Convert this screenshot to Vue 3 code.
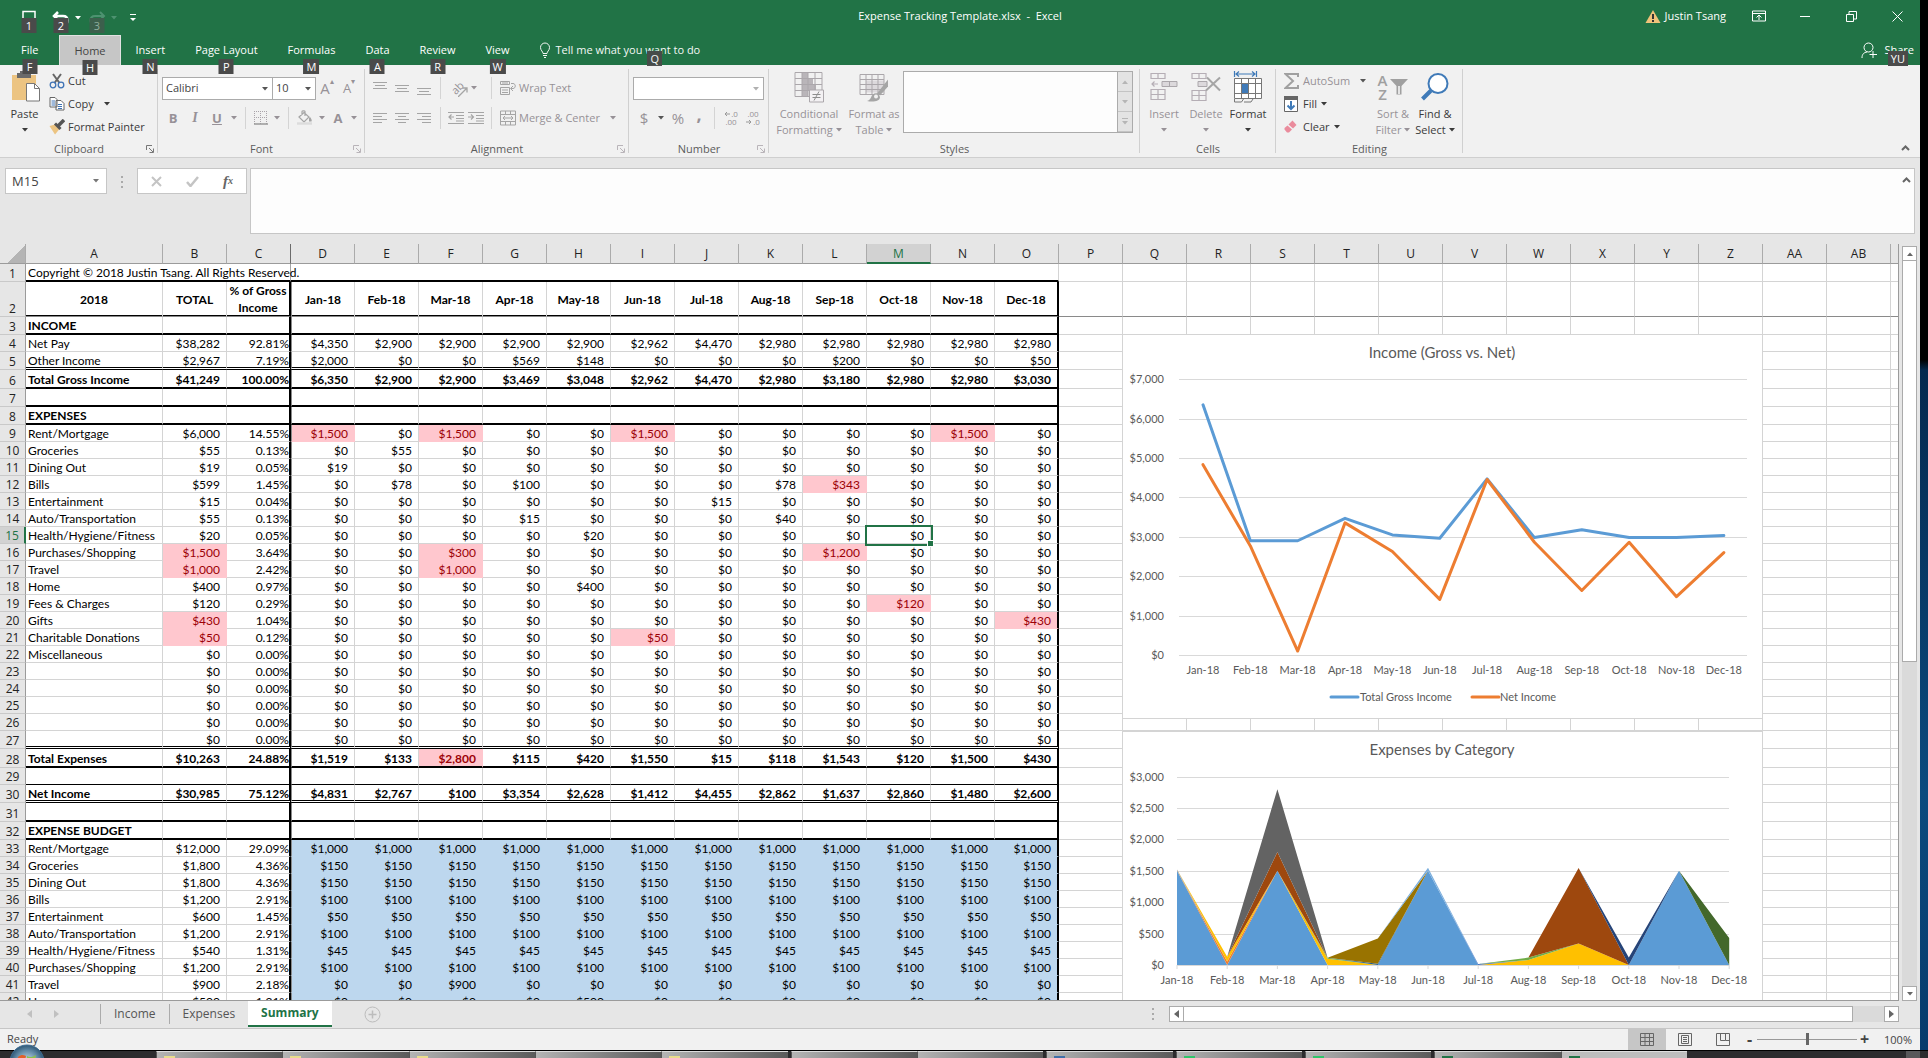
<script setup>
import { h } from 'vue'

const icons = {
  save: [16, 16, '<path d="M2 1.500h12v12H2zM4.500 13v-4h7v4" stroke="#fff" stroke-width="1.500"/>'],
  undo: [18, 16, '<path d="M6 2 2 6l4 4M2.500 6H11c3 0 4.500 2 4.500 4.500S14 14 12 14" stroke="#fff" stroke-width="2.500"/>'],
  redo: [18, 16, '<path d="M12 2l4 4-4 4M15.500 6H7c-3 0-4.500 2-4.500 4.500S4 14 6 14" stroke="#4d9270" stroke-width="2"/>'],
  custom: [8, 10, '<path d="M1 1.500h6" stroke="#fff"/><path d="M1 5h6L4 8z" fill="#fff"/>'],
  bulb: [12, 16, '<path d="M4 11.500c0-2-2.500-3-2.500-6a4.500 4.500 0 0 1 9 0c0 3-2.500 4-2.500 6zM4 13.500h4M5 15.500h2" stroke="#fff"/>'],
  warn: [16, 15, '<path d="M8 1 15.500 14H.5z" fill="#f0c27a"/><path d="M8 5v5" stroke="#333" stroke-width="2"/><path d="M8 11v2" stroke="#333" stroke-width="2"/>'],
  display: [14, 12, '<path d="M.5 1h13v10H.5zM.5 3.500h13M7 10V5M4.500 7.500 7 5l2.500 2.500" stroke="#fff"/>'],
  min: [10, 10, '<path d="M0 5.500h10" stroke="#fff"/>'],
  restore: [11, 11, '<path d="M.5 3.500h7v7h-7zM3 3V.5h7.500V8H8" stroke="#fff"/>'],
  close: [11, 11, '<path d="M.5.500l10 10M10.500.500l-10 10" stroke="#fff"/>'],
  share: [16, 17, '<circle cx="7.500" cy="5.500" r="4.500" stroke="#fff"/><path d="M1 16c0-4 2-5.500 5-6M12 9v7M8.500 12.500H16" stroke="#fff"/>'],
  paste: [30, 32, '<path d="M1 4h24v25H1z" fill="#ecc482"/><path d="M6 7V2h3V0h8v2h3v5z" fill="#6a6a6a"/><path d="M15.500 12.500h8l5 5V30h-13z" fill="#fff" stroke="#777"/><path d="M23.500 12.500v5h5" stroke="#777"/>'],
  cut: [16, 16, '<path d="M4 1l6.500 9M12 1 5.500 10" stroke="#666" stroke-width="2"/><circle cx="4" cy="12" r="2.800" stroke="#3f73b5" stroke-width="1.300"/><circle cx="12" cy="12" r="2.800" stroke="#3f73b5" stroke-width="1.300"/>'],
  copy: [16, 16, '<path d="M1 1.500h5l2 2V11H1zM7 4.500h5l3 3V14H7z" fill="#fff" stroke="#666"/><path d="M2.500 5H6M2.500 7H6M2.500 9H6M9 8.500h4M9 10.500h4M9 12.500h4" stroke="#3f73b5"/>'],
  brush: [16, 16, '<path d="M.5 7 6 5.500 10.500 10 6 15.500z" fill="#ecc482"/><path d="M6 4.500 11.500 10" stroke="#555" stroke-width="3"/><path d="M9 7l4-4 2-2" stroke="#555" stroke-width="3.500"/>'],
  launch: [8, 8, '<path d="M.5 5V.5H6M3 3l4 4M7.500 3.500v4h-4" stroke="currentColor"/>'],
  caret: [6, 4, '<path d="M0 0h6L3 3.500z" fill="currentColor"/>'],
  upcaret: [6, 4, '<path d="M0 4h6L3 .5z" fill="currentColor"/>'],
  more: [8, 7, '<path d="M1 .5h6" stroke="currentColor"/><path d="M1 3h6L4 6.500z" fill="currentColor"/>'],
  chev: [9, 6, '<path d="M1 5l3.500-3.500L8 5" stroke="#666" stroke-width="2"/>'],
  border: [14, 14, '<path d="M.5 0v13M6.500 0v13M12.500 0v13M0 .5h13M0 6.500h13" stroke="#a9a3a9" stroke-dasharray="1 1"/><path d="M0 13h14" stroke="#999" stroke-width="1.500"/>'],
  bucket: [16, 16, '<path d="M2 7l5-4.500L12 7l-5 5zM5 5V1.500c0-1 3-1 3 0V6" stroke="#a5a5a5" stroke-width="1.200"/><path d="M13 7c1.500 2 2 3 1.500 4.500H12V8z" fill="#a5a5a5"/><path d="M0 13.500h15" stroke="#dcdcdc" stroke-width="2.500"/>'],
  top: [14, 14, '<path d="M0 1.500h14M2 4.500h10M0 7.500h14" stroke="#a5a5a5"/>'],
  mid: [14, 14, '<path d="M0 4.500h14M2 7.500h10M0 10.500h14" stroke="#a5a5a5"/>'],
  bot: [14, 14, '<path d="M0 7.500h14M2 10.500h10M0 13.500h14" stroke="#a5a5a5"/>'],
  left: [14, 14, '<path d="M0 2.500h14M0 5.500h9M0 8.500h14M0 11.500h9" stroke="#a5a5a5"/>'],
  center: [14, 14, '<path d="M0 2.500h14M3 5.500h8M0 8.500h14M3 11.500h8" stroke="#a5a5a5"/>'],
  right: [14, 14, '<path d="M0 2.500h14M5 5.500h9M0 8.500h14M5 11.500h9" stroke="#a5a5a5"/>'],
  arrowNE: [10, 10, '<path d="M0 10 9 1M4.500 1H9v4.500" stroke="#a5a5a5" stroke-width="1.300"/>'],
  outdent: [16, 14, '<path d="M0 1.500h16M8 4.500h8M8 7.500h8M0 12.500h16M8 10h8M6 6H1M3.500 3.500 1 6l2.500 2.500" stroke="#a5a5a5" stroke-width="1.200"/>'],
  indent: [16, 14, '<path d="M0 1.500h16M8 4.500h8M8 7.500h8M0 12.500h16M8 10h8M0 6h5M3 3.500 5.500 6 3 8.500" stroke="#a5a5a5" stroke-width="1.200"/>'],
  wrap: [16, 16, '<path d="M.5 1.500h9v3h-9zM.5 7.500h9v7h-9zM2 3h6M2 10h6M2 12.500h6M11 3.500h2c3 0 3 5 0 5h-2M13 6l-2.500 2.500L13 11" stroke="#a5a5a5"/>'],
  merge: [16, 16, '<path d="M.5 1h15v14H.5zM.5 4.500h15M.5 11.500h15M5.500 1v3.500M10.500 1v3.500M5.500 11.500V15M10.500 11.500V15M3 8h10M5 6 3 8l2 2M11 6l2 2-2 2" stroke="#a5a5a5"/>'],
  arrL: [6, 6, '<path d="M6 3H1M3 1 1 3l2 2" stroke="#999"/>'],
  arrR: [6, 6, '<path d="M0 3h5M3 1l2 2-2 2" stroke="#999"/>'],
  cond: [30, 31, '<path d="M8 1h6v24H8z" fill="#b9b5b9"/><path d="M14 7h5v6h-5zM14 13h8v6h-8z" fill="#b9b5b9"/><path d="M1 1h27v24H1zM1 7h27M1 13h27M1 19h27M8 1v24M14 1v24M21 1v24" stroke="#aba7ab"/><path d="M15.500 18.500h14v12h-14z" fill="#f3f1f3" stroke="#aba7ab"/><path d="M18.500 23h8M18.500 26h8M25 20l-5 9" stroke="#8d8d8d"/>'],
  fmtTable: [30, 31, '<path d="M7 9h18v12H7z" fill="#dcd9dc"/><path d="M1 3h24v20H1zM1 8h24M1 13h24M1 18h24M7 3v20M13 3v20M19 3v20" stroke="#aba7ab"/><path d="M18 22 29 8v7l-8 9z" fill="#a5a5a5"/><path d="M19 22c-4-1-6 1-7 4-1 2-2 3-4 3.500 5 1 13 1 13-4z" fill="#a5a5a5"/><circle cx="17" cy="25" r="2" fill="#f1f1f1"/>'],
  insert: [28, 31, '<path d="M1 2h14v5H1zM8 2v5M1 18h14v10H1zM8 18v10M1 23h14M8 12.500H2M4.500 10 2 12.500 4.500 15" stroke="#b5aeb5" stroke-width="1.200"/><path d="M12 10h15v5H12z" fill="#dcd9dc" stroke="#aba7ab"/><path d="M19.500 10v5" stroke="#aba7ab"/>'],
  del: [30, 31, '<path d="M1 2h14v5H1zM8 2v5M1 19h14v10H1zM8 19v10M1 24h14" stroke="#b5aeb5" stroke-width="1.200"/><path d="M7 10h9v5H7z" fill="#dcd9dc" stroke="#aba7ab"/><path d="M16 6l13 13M29 6 15 19" stroke="#a5a5a5" stroke-width="2"/>'],
  format: [30, 32, '<path d="M1.500 0v6M23.500 0v6M3 3h19M6 .5 3 3l3 2.500M19 .5 22 3l-3 2.500" stroke="#3f7ab8" stroke-width="1.200"/><path d="M1.500 7.500h27v20h-27z" fill="#fff"/><path d="M8 13h8v9H8z" fill="#3f7ab8"/><path d="M1.500 7.500h27v20h-27zM1.500 12.500h27M1.500 22.500h27M8.500 7.500v20M15.500 7.500v20M22.500 7.500v20M1.500 28v3h7l2-3M11 31h7l2-3" stroke="#777"/>'],
  sigma: [16, 16, '<path d="M14 4V1H1.500L9 8l-7.500 7H14v-3" stroke="#a0a0a0" stroke-width="2"/>'],
  fill: [14, 16, '<path d="M.5 3h13v12.500H.5z" fill="#fff" stroke="#666"/><path d="M0 0h14v4H0z" fill="#666"/><path d="M7 5v8M3.500 9.500 7 13l3.500-3.500" stroke="#3f7ab8" stroke-width="2"/>'],
  eraser: [14, 14, '<path d="M8.500.5 12.500 5 9 8.500 4.500 4.500z" fill="#ea8b9c"/><path d="M3.500 5.500 8 9.500 5 12.500H3L.5 9.500V8z" fill="#ea8b9c"/>'],
  funnel: [18, 16, '<path d="M0 0h18l-6.500 7v8.500h-5V7z" fill="#a0a0a0"/><path d="M9 7v8" stroke="#e5e5e5" stroke-width="2"/>'],
  find: [28, 28, '<circle cx="17" cy="10.500" r="9.500" fill="#fff" stroke="#3f7ab8" stroke-width="2"/><path d="M10 17.500 1.500 26" stroke="#3f7ab8" stroke-width="4"/>'],
  x: [11, 11, '<path d="M1 1l9 9M10 1 1 10" stroke="#c4c4c4" stroke-width="2"/>'],
  check: [13, 11, '<path d="M1 6l3.500 4L12 1" stroke="#c4c4c4" stroke-width="2.500"/>'],
  triL: [5, 8, '<path d="M5 0v8L0 4z" fill="currentColor"/>'],
  triR: [5, 8, '<path d="M0 0v8l5-4z" fill="currentColor"/>'],
  plus: [17, 17, '<circle cx="8.500" cy="8.500" r="7.500" stroke="#bcbcbc"/><path d="M8.500 4.500v8M4.500 8.500h8" stroke="#bcbcbc" stroke-width="1.500"/>'],
  normal: [14, 13, '<path d="M.5.5h13v12H.5zM.5 4.500h13M.5 8.500h13M5 .5v12M9.500.5v12" stroke="#666"/>'],
  pageL: [14, 13, '<path d="M.5.5h13v12H.5zM3.500 2.500h7v8h-7zM5 4.500h4M5 6.500h4M5 8.500h4" stroke="#666"/>'],
  pageB: [14, 13, '<path d="M.5.5h13v12H.5zM4.500.5v7h5v-7M9.500 7.500h4" stroke="#666"/>'],
  orb: [36, 14, '<defs><radialGradient id="g"><stop offset="0" stop-color="#cfe6f2"/><stop offset=".7" stop-color="#5d86a3"/><stop offset="1" stop-color="#2f5876"/></radialGradient></defs><circle cx="18" cy="18" r="17" fill="url(#g)" stroke="#3d6c94"/><path d="M9 13c3-2.500 5-2.500 8-1l-1 4H8z" fill="#e2602a"/><path d="M18 12c3 2 6 1 9-1l-1 5h-8z" fill="#8cc04b"/>'],
}
const Ico = (p) => {
  const [w, ht, body] = icons[p.n]
  return h('svg', { width: w, height: ht, viewBox: `0 0 ${w} ${ht}`, fill: 'none', 'aria-hidden': 'true', innerHTML: body })
}
Ico.props = ['n']

const tabs = [['File', 'F'], ['Home', 'H'], ['Insert', 'N'], ['Page Layout', 'P'], ['Formulas', 'M'], ['Data', 'A'], ['Review', 'R'], ['View', 'W']]

const cols = ['A', 'B', 'C', 'D', 'E', 'F', 'G', 'H', 'I', 'J', 'K', 'L', 'M', 'N', 'O', 'P', 'Q', 'R', 'S', 'T', 'U', 'V', 'W', 'X', 'Y', 'Z', 'AA', 'AB', '']
const months = ['Jan-18', 'Feb-18', 'Mar-18', 'Apr-18', 'May-18', 'Jun-18', 'Jul-18', 'Aug-18', 'Sep-18', 'Oct-18', 'Nov-18', 'Dec-18']

const usd = (n) => '$' + n.toLocaleString('en-US')
const at = (o) => months.map((_, i) => o[i] || 0)
const all = (n) => Array(12).fill(n)
const row = (n, kind, label, total, pct, vals, hot = []) => ({ n, kind, hot, cells: [label, total === '' ? '' : usd(total), pct, ...(vals ? vals.map(usd) : all(''))] })

const gross = [6350, 2900, 2900, 3469, 3048, 2962, 4470, 2980, 3180, 2980, 2980, 3030]
const net = [4831, 2767, 100, 3354, 2628, 1412, 4455, 2862, 1637, 2860, 1480, 2600]
const expenses = [
  ['Rent/Mortgage', 6000, '14.55%', at({ 0: 1500, 2: 1500, 5: 1500, 10: 1500 }), [3, 5, 8, 13], '#5b9bd5'],
  ['Groceries', 55, '0.13%', at({ 1: 55 }), [], '#ed7d31'],
  ['Dining Out', 19, '0.05%', at({ 0: 19 }), [], '#a5a5a5'],
  ['Bills', 599, '1.45%', at({ 1: 78, 3: 100, 7: 78, 8: 343 }), [11], '#ffc000'],
  ['Entertainment', 15, '0.04%', at({ 6: 15 }), [], '#4472c4'],
  ['Auto/Transportation', 55, '0.13%', at({ 3: 15, 7: 40 }), [], '#70ad47'],
  ['Health/Hygiene/Fitness', 20, '0.05%', at({ 4: 20 }), [], '#255e91'],
  ['Purchases/Shopping', 1500, '3.64%', at({ 2: 300, 8: 1200 }), [1, 5, 11], '#9e480e'],
  ['Travel', 1000, '2.42%', at({ 2: 1000 }), [1, 5], '#636363'],
  ['Home', 400, '0.97%', at({ 4: 400 }), [], '#997300'],
  ['Fees & Charges', 120, '0.29%', at({ 9: 120 }), [12], '#264478'],
  ['Gifts', 430, '1.04%', at({ 11: 430 }), [1, 14], '#43682b'],
  ['Charitable Donations', 50, '0.12%', at({ 5: 50 }), [1, 8], '#7cafdd'],
  ['Miscellaneous', 0, '0.00%', all(0), []],
]
const budget = [
  ['Rent/Mortgage', 12000, '29.09%', all(1000)],
  ['Groceries', 1800, '4.36%', all(150)],
  ['Dining Out', 1800, '4.36%', all(150)],
  ['Bills', 1200, '2.91%', all(100)],
  ['Entertainment', 600, '1.45%', all(50)],
  ['Auto/Transportation', 1200, '2.91%', all(100)],
  ['Health/Hygiene/Fitness', 540, '1.31%', all(45)],
  ['Purchases/Shopping', 1200, '2.91%', all(100)],
  ['Travel', 900, '2.18%', at({ 2: 900 })],
  ['Home', 500, '1.21%', at({ 4: 500 })],
]
const rows = [
  { n: 2, kind: 'head', hot: [], cells: ['2018', 'TOTAL', '% of Gross Income', ...months] },
  row(3, 'bold thick', 'INCOME', '', ''),
  row(4, '', 'Net Pay', 38282, '92.81%', [4350, 2900, 2900, 2900, 2900, 2962, 4470, 2980, 2980, 2980, 2980, 2980]),
  row(5, 'dbl', 'Other Income', 2967, '7.19%', [2000, 0, 0, 569, 148, 0, 0, 0, 200, 0, 0, 50]),
  row(6, 'bold thick tall', 'Total Gross Income', 41249, '100.00%', gross),
  row(7, 'thick', '', '', ''),
  row(8, 'bold thick', 'EXPENSES', '', ''),
  ...expenses.map((e, i) => row(9 + i, '', e[0], e[1], e[2], e[3], e[4])),
  ...[23, 24, 25, 26].map((n) => row(n, '', '', 0, '0.00%', all(0))),
  row(27, 'dbl', '', 0, '0.00%', all(0)),
  row(28, 'bold thick tall', 'Total Expenses', 10263, '24.88%', [1519, 133, 2800, 115, 420, 1550, 15, 118, 1543, 120, 1500, 430], [5]),
  row(29, 'thin', '', '', ''),
  row(30, 'bold dbl', 'Net Income', 30985, '75.12%', net),
  row(31, 'thick tall', '', '', ''),
  row(32, 'bold thick', 'EXPENSE BUDGET', '', ''),
  ...budget.map((b, i) => row(33 + i, 'plan', b[0], b[1], b[2], b[3])),
]

const lx = (i) => 81 + i * 47.35
const ly = (v) => 321 - v * 0.0394
const line = (d) => d.map((v, i) => `${lx(i)},${ly(v)}`).join(' ')
const ax = (i) => 55 + i * 50.2
const ay = (v) => 234 - v * 0.0628
let base = all(0)
const areas = expenses.slice(0, 13).map((e) => {
  const next = base.map((b, i) => b + e[3][i])
  const pts = [...next.map((v, i) => `${ax(i)},${ay(v)}`), ...base.map((v, i) => `${ax(i)},${ay(v)}`).reverse()].join(' ')
  base = next
  return { color: e[5], pts }
})
const tasks = ['f', 'f', 'f', '', 'f end', '', 'end', 'b end', 'g end', 'g end', 'x', 'x lit']
</script>

<template>
  <div class="desktop">
    <div class="window">
      <header class="titlebar">
        <div class="quick">
          <button class="q" aria-label="Save"><Ico n="save" /><kbd class="tip">1</kbd></button>
          <button class="q" aria-label="Undo"><Ico n="undo" /><kbd class="tip">2</kbd></button>
          <button class="q caret-w" aria-label="Undo list"><Ico n="caret" /></button>
          <button class="q" aria-label="Redo"><Ico n="redo" /><kbd class="tip faint">3</kbd></button>
          <button class="q caret-w dimg" aria-label="Redo list"><Ico n="caret" /></button>
          <button class="q" aria-label="Customize"><Ico n="custom" /></button>
        </div>
        <div class="title">Expense Tracking Template.xlsx&nbsp; -&nbsp; Excel</div>
        <div class="wincontrols">
          <span class="user"><Ico n="warn" />Justin Tsang</span>
          <button aria-label="Ribbon display"><Ico n="display" /></button>
          <button aria-label="Minimize"><Ico n="min" /></button>
          <button aria-label="Restore"><Ico n="restore" /></button>
          <button aria-label="Close"><Ico n="close" /></button>
        </div>
      </header>
      <nav class="tabs">
        <button v-for="t in tabs" :key="t[0]" class="tab" :class="{ on: t[0] === 'Home', file: t[0] === 'File' }">{{ t[0] }}<kbd class="tip">{{ t[1] }}</kbd></button>
        <button class="tell"><Ico n="bulb" />Tell me what you want to do<kbd class="tip up">Q</kbd></button>
        <button class="share"><Ico n="share" />Share<kbd class="tip up">YU</kbd></button>
      </nav>

      <div class="ribbon">
        <section class="group clip">
          <div class="body">
            <button class="big paste"><Ico n="paste" /><span>Paste</span><Ico n="caret" /></button>
            <div class="stack">
              <button><i><Ico n="cut" /></i>Cut</button>
              <button><i><Ico n="copy" /></i>Copy<Ico n="caret" class="far" /></button>
              <button><i><Ico n="brush" /></i>Format Painter</button>
            </div>
          </div>
          <footer>Clipboard<Ico n="launch" class="launch" /></footer>
        </section>
        <section class="group font off">
          <div class="lines">
            <div class="ln">
              <label class="combo fname"><select aria-label="Font"><option>Calibri</option></select><Ico n="caret" /></label>
              <label class="combo fsize"><select aria-label="Font size"><option>10</option></select><Ico n="caret" /></label>
              <button class="s22 serif">A<sup>▴</sup></button><button class="s22 serif sm">A<sup>▾</sup></button>
            </div>
            <div class="ln">
              <button class="s22 b">B</button><button class="s22 it">I</button><button class="s22 u">U</button><span class="s12"><Ico n="caret" /></span><span class="sep"></span>
              <button class="s20" aria-label="Borders"><Ico n="border" /></button><span class="s12"><Ico n="caret" /></span><span class="sep"></span>
              <button class="s22" aria-label="Fill colour"><Ico n="bucket" /></button><span class="s12"><Ico n="caret" /></span><button class="s20 b">A</button><span class="s12"><Ico n="caret" /></span>
            </div>
          </div>
          <footer>Font<Ico n="launch" class="launch" /></footer>
        </section>
        <section class="group align off">
          <div class="lines">
            <div class="ln">
              <button v-for="k in ['top', 'mid', 'bot']" :key="k" class="s22" :aria-label="k"><Ico :n="k" /></button><span class="sep"></span>
              <div class="pair"><button class="s22 rot" aria-label="Orientation"><em>ab</em><Ico n="arrowNE" /></button><span class="s12"><Ico n="caret" /></span></div><span class="sep"></span>
              <button class="txt"><i><Ico n="wrap" /></i>Wrap Text</button>
            </div>
            <div class="ln">
              <button v-for="k in ['left', 'center', 'right']" :key="k" class="s22" :aria-label="k"><Ico :n="k" /></button><span class="sep"></span>
              <div class="pair"><button class="s20" aria-label="Decrease indent"><Ico n="outdent" /></button><button class="s20" aria-label="Increase indent"><Ico n="indent" /></button></div><span class="sep"></span>
              <button class="txt"><i><Ico n="merge" /></i>Merge &amp; Center<Ico n="caret" class="far" /></button>
            </div>
          </div>
          <footer>Alignment<Ico n="launch" class="launch" /></footer>
        </section>
        <section class="group number off">
          <div class="lines">
            <div class="ln"><label class="combo fnum"><select aria-label="Number format"><option></option></select><Ico n="caret" /></label></div>
            <div class="ln">
              <button class="s22 lg">$</button><span class="s12 dark"><Ico n="caret" /></span><button class="s22 lg">%</button><button class="s20 comma">,</button><span class="sep"></span>
              <button class="s22 dec"><span><Ico n="arrL" />.0</span><span>.00</span></button><button class="s22 dec"><span>.00</span><span><Ico n="arrR" />.0</span></button>
            </div>
          </div>
          <footer>Number<Ico n="launch" class="launch" /></footer>
        </section>
        <section class="group styles off">
          <div class="body">
            <button class="big cf"><Ico n="cond" /><span>Conditional</span><span>Formatting <Ico n="caret" /></span></button>
            <button class="big ft"><Ico n="fmtTable" /><span>Format as</span><span>Table <Ico n="caret" /></span></button>
            <div class="gallery"><div class="swatches"></div><div class="spin"><span><Ico n="upcaret" /></span><span><Ico n="caret" /></span><span><Ico n="more" /></span></div></div>
          </div>
          <footer>Styles</footer>
        </section>
        <section class="group cells">
          <div class="body">
            <button class="big off"><Ico n="insert" /><span>Insert</span><Ico n="caret" /></button>
            <button class="big off"><Ico n="del" /><span>Delete</span><Ico n="caret" /></button>
            <button class="big"><Ico n="format" /><span>Format</span><Ico n="caret" /></button>
          </div>
          <footer>Cells</footer>
        </section>
        <section class="group editing">
          <div class="body">
            <div class="stack">
              <button class="grey"><i><Ico n="sigma" /></i>AutoSum<Ico n="caret" class="far dark" /></button>
              <button><i><Ico n="fill" /></i>Fill<Ico n="caret" class="near" /></button>
              <button><i><Ico n="eraser" /></i>Clear<Ico n="caret" class="near" /></button>
            </div>
            <button class="big off sort"><span class="az"><b>A<br>Z</b><Ico n="funnel" /></span><span>Sort &amp;</span><span>Filter <Ico n="caret" /></span></button>
            <button class="big findb"><Ico n="find" /><span>Find &amp;</span><span>Select <Ico n="caret" /></span></button>
          </div>
          <footer>Editing</footer>
        </section>
        <button class="collapse" aria-label="Collapse ribbon"><Ico n="chev" /></button>
      </div>

      <div class="formula">
        <label class="namebox"><input aria-label="Name box" value="M15"><Ico n="caret" /></label>
        <span class="dots"></span>
        <div class="fx"><button aria-label="Cancel"><Ico n="x" /></button><button aria-label="Enter"><Ico n="check" /></button><button class="fxi">f<sub>x</sub></button></div>
        <label class="fbar"><textarea aria-label="Formula bar"></textarea><Ico n="chev" /></label>
      </div>

      <main class="work">
        <div class="sheet">
          <table>
            <colgroup><col class="c-h"><col class="c-a"><col v-for="c in cols.slice(1)" :key="c" class="c-n"></colgroup>
            <thead>
              <tr><th class="corner"></th><th v-for="c in cols" :key="c" :class="{ sel: c === 'M', frz: c === 'C' }">{{ c }}</th></tr>
            </thead>
            <tbody>
              <tr class="r-first">
                <th>1</th><td colspan="3" class="copy">Copyright © 2018 Justin Tsang. All Rights Reserved.</td><td colspan="12" class="cover"></td><td v-for="c in 14" :key="c"></td>
              </tr>
              <tr v-for="r in rows" :key="r.n" :class="r.kind">
                <th :class="{ sel: r.n === 15 }">{{ r.n }}</th>
                <td v-for="(v, i) in r.cells" :key="i" :class="['d', 'k' + (i < 3 ? i : i === 14 ? 14 : i === 3 ? 3 : 'n'), { hot: r.hot.includes(i), cur: r.n === 15 && i === 12 }]">{{ v }}</td>
                <td v-for="c in 14" :key="'e' + c"></td>
              </tr>
            </tbody>
          </table>

          <svg class="chart one" width="641" height="385" viewBox="0 0 641 385">
            <text x="320" y="24" class="ct">Income (Gross vs. Net)</text>
            <g v-for="k in 8" :key="k">
              <line x1="57" x2="625" :y1="Math.round(ly((k - 1) * 1000)) + 0.5" :y2="Math.round(ly((k - 1) * 1000)) + 0.5" class="gl" />
              <text x="42" :y="Math.round(ly((k - 1) * 1000)) + 4" class="yl">{{ usd((k - 1) * 1000) }}</text>
            </g>
            <text v-for="(m, i) in months" :key="m" :x="lx(i)" y="340" class="xl">{{ m }}</text>
            <polyline :points="line(gross)" stroke="#5b9bd5" class="pl" />
            <polyline :points="line(net)" stroke="#ed7d31" class="pl" />
            <line x1="209" x2="236" y1="363" y2="363" stroke="#5b9bd5" class="pl" />
            <text x="238" y="367" class="lg">Total Gross Income</text>
            <line x1="350" x2="377" y1="363" y2="363" stroke="#ed7d31" class="pl" />
            <text x="378" y="367" class="lg">Net Income</text>
          </svg>
          <svg class="chart two" width="641" height="385" viewBox="0 0 641 385">
            <text x="320" y="24" class="ct">Expenses by Category</text>
            <g v-for="k in 7" :key="k">
              <line x1="55" x2="607" :y1="Math.round(ay((k - 1) * 500)) + 0.5" :y2="Math.round(ay((k - 1) * 500)) + 0.5" class="gl" />
              <text x="42" :y="Math.round(ay((k - 1) * 500)) + 4" class="yl">{{ usd((k - 1) * 500) }}</text>
            </g>
            <polygon v-for="a in areas" :key="a.color" :points="a.pts" :fill="a.color" />
            <g v-for="(m, i) in months" :key="m">
              <line :x1="ax(i)" :x2="ax(i)" y1="234" y2="238" class="gl" />
              <text :x="ax(i)" y="253" class="xl">{{ m }}</text>
            </g>
          </svg>
        </div>
        <div class="vscroll">
          <button aria-label="Scroll up"><Ico n="upcaret" /></button><div class="vthumb"></div><div class="vtrack"></div><button aria-label="Scroll down"><Ico n="caret" /></button>
        </div>
      </main>

      <div class="sheettabs">
        <div class="navs"><button aria-label="Previous sheet"><Ico n="triL" /></button><button aria-label="Next sheet"><Ico n="triR" /></button></div>
        <button class="st">Income</button><button class="st">Expenses</button><button class="st on">Summary</button>
        <button class="add" aria-label="New sheet"><Ico n="plus" /></button>
        <span class="dots"></span>
        <div class="hscroll"><button aria-label="Scroll left"><Ico n="triL" /></button><div class="hthumb"></div><div class="htrack"></div><button aria-label="Scroll right"><Ico n="triR" /></button></div>
      </div>
      <div class="status">
        <span>Ready</span>
        <div class="views">
          <button class="on" aria-label="Normal"><Ico n="normal" /></button><button aria-label="Page layout"><Ico n="pageL" /></button><button aria-label="Page break"><Ico n="pageB" /></button>
          <button class="zb">-</button><input type="range" min="0" max="100" value="50" aria-label="Zoom"><button class="zb">+</button><span class="pc">100%</span>
        </div>
      </div>
    </div>
    <div class="taskbar">
      <Ico n="orb" class="orb" />
      <div class="pad"></div>
      <div v-for="(t, i) in tasks" :key="i" class="task" :class="t"></div>
      <div class="peek"></div>
    </div>
  </div>
</template>

<style>
body { margin: 0; }
</style>
<style scoped>
* { box-sizing: border-box; }
.desktop { height: 100vh; overflow: hidden; display: flex; flex-direction: column; font: 11px/16px "Open Sans", "Noto Sans", sans-serif; color: #444; background: linear-gradient(#000 0, #000 34%, #04294f 35%, #0b4a7e 75%, #063a6b 100%); }
button { font: inherit; color: inherit; background: none; border: 0; padding: 0; margin: 0; display: flex; align-items: center; justify-content: center; white-space: nowrap; }
svg { display: block; flex: none; }
.window { flex: 1; min-height: 0; margin-right: 8px; display: flex; flex-direction: column; background: #e6e6e6; }

.titlebar { height: 35px; background: #217346; color: #fff; display: grid; grid-template-columns: 1fr auto 1fr; align-items: center; flex: none; }
.title { padding-bottom: 3px; }
.quick { display: flex; align-items: center; padding-left: 18px; }
.q { position: relative; width: 22px; height: 35px; }
.q:nth-child(2) { margin-left: 12px; width: 18px; }
.q:nth-child(4) { margin-left: 0; }
.caret-w { width: 16px; }
.dimg { color: #4d9270; width: 12px; }
.quick .q:last-child { margin-left: 5px; width: 16px; }
.wincontrols { display: flex; justify-content: flex-end; align-items: center; padding-bottom: 3px; }
.wincontrols button { width: 46px; height: 30px; flex: none; }
.user { display: flex; align-items: center; gap: 4px; margin-right: 10px; }
.tip { position: absolute; z-index: 3; left: 50%; top: 24px; transform: translateX(-50%); min-width: 15px; height: 15px; padding: 0 3px; background: #4a4a4a; color: #fff; font: 11px/15px "Open Sans", sans-serif; text-align: center; }
.titlebar .tip { top: 18px; }
.tip.up { top: 16px; left: auto; right: 46px; transform: none; }
.tip.faint { background: #3c5f4c; color: #8fae9d; }

.tabs { height: 30px; flex: none; background: #217346; color: #fff; display: flex; }
.tab { position: relative; padding: 0 15px; }
.tab.file { padding: 0 21px; }
.tab.on { background: #c6c6c6; color: #444; border: 1px solid #e2e2e2; border-bottom: 0; padding: 0 14px; }
.tell { position: relative; margin-left: 6px; padding: 0 8px; gap: 5px; opacity: .95; }
.share { position: relative; margin-left: auto; padding-right: 6px; gap: 7px; }
.share .tip.up { right: 12px; }

.ribbon { height: 93px; flex: none; display: flex; background: #f1f1f1; border-bottom: 1px solid #cfcfcf; }
.group { flex: none; position: relative; margin-top: 4px; height: 88px; display: flex; flex-direction: column; }
.group::after { content: ""; position: absolute; right: 0; top: 0; bottom: 4px; width: 1px; background: #d0d0d0; }
.group footer { height: 16px; margin-top: auto; text-align: center; color: #5c5c5c; line-height: 16px; }
.launch { position: absolute; right: 4px; bottom: 4px; color: #777; }
.off .launch { color: #b9b4b9; }
.clip { width: 158px; } .font { width: 207px; } .align { width: 264px; } .number { width: 140px; } .styles { width: 371px; } .cells { width: 136px; } .editing { width: 187px; }
.body { display: flex; height: 70px; }
.big { flex-direction: column; justify-content: flex-start; line-height: 16px; padding-top: 2px; width: 42px; color: #3a3a3a; }
.big > svg:first-child { height: 32px; margin-bottom: 3px; }
.big > svg:last-child { margin-top: 6px; }
.big span { display: flex; align-items: center; gap: 3px; }
.paste { width: 49px; }
.paste > svg:first-child { margin-left: 3px; }
.off, .off .big, .big.off { color: #979197; }
.stack { display: flex; flex-direction: column; color: #3a3a3a; }
.stack button { height: 23px; justify-content: flex-start; }
.stack i, .txt i { width: 19px; display: flex; flex: none; justify-content: flex-start; }
.stack .grey { color: #979197; }
.far { margin-left: 10px; } .near { margin-left: 4px; } .dark { color: #555; }
.lines { padding-top: 4px; }
.ln { display: flex; height: 30px; align-items: center; padding-left: 4px; }
.combo { position: relative; height: 23px; border: 1px solid #ababab; background: #fff; color: #444; }
.combo select { appearance: none; border: 0; background: none; width: 100%; height: 21px; padding: 0 3px; font: inherit; color: #444; }
.combo svg { position: absolute; right: 4px; top: 9px; color: #555; pointer-events: none; }
.fname { width: 111px; } .fsize { width: 44px; margin-left: -1px; } .fnum { width: 131px; }
.fnum svg { color: #b0b0b0; }
.s22 { width: 22px; height: 24px; display: flex; align-items: center; justify-content: center; }
.s20 { width: 20px; height: 24px; display: flex; align-items: center; justify-content: center; }
.s12 { width: 12px; display: flex; justify-content: center; }
.sep { width: 1px; height: 22px; margin: 0 5px; background: #d4d4d4; }
.b, .u, .it { font-size: 13px; font-weight: 700; }
.it { font-family: "Liberation Serif", serif; font-style: italic; font-size: 14px; }
.u { text-decoration: underline; }
.serif { font-size: 15px; } .serif sup { font-size: 8px; align-self: flex-start; line-height: 10px; }
.sm { font-size: 13px; }
.pair { width: 40px; display: flex; align-items: center; }
.rot { position: relative; } .rot em { font-style: normal; transform: rotate(-45deg); } .rot svg { position: absolute; right: 0; bottom: 3px; }
.txt i { width: 22px; padding-left: 3px; }
.lg { font-size: 15px; } .comma { font-size: 18px; font-weight: 700; padding-bottom: 8px; }
.dec { flex-direction: column; font-size: 8px; line-height: 8px; } .dec span { display: flex; align-items: center; gap: 1px; }
.cf { width: 80px; } .ft { width: 50px; }
.gallery { display: flex; margin: 2px 0 0 4px; width: 230px; height: 62px; border: 1px solid #ababab; }
.swatches { flex: 1; background: #fdfdfd; }
.spin { width: 15px; display: flex; flex-direction: column; background: #e3e3e3; border-left: 1px solid #ababab; color: #b5b5b5; }
.spin span { flex: 1; display: flex; align-items: center; justify-content: center; border-bottom: 1px solid #c4c4c4; }
.cells .body { padding-left: 3px; }
.editing .body { padding-left: 8px; }
.editing .stack { width: 88px; }
.sort { width: 42px; }
.big .az { height: 32px; margin-bottom: 3px; } .az b { font: 15px/14px "Open Sans", sans-serif; color: #a0a0a0; font-weight: 600; }
.collapse { margin: auto 9px 3px auto; width: 12px; height: 12px; }

.formula { height: 86px; flex: none; display: flex; align-items: flex-start; padding: 10px 5px 0; }
.namebox { position: relative; width: 102px; height: 26px; border: 1px solid #c6c6c6; background: #fff; }
.namebox input { width: 80px; height: 24px; border: 0; padding: 0 6px; font: 13px "Open Sans", sans-serif; color: #444; background: none; }
.namebox svg { position: absolute; right: 7px; top: 10px; color: #777; }
.dots { width: 2px; height: 12px; background: repeating-linear-gradient(#aaa 0 2px, transparent 2px 5px); }
.formula .dots { margin: 8px 14px 0; }
.fx { display: flex; width: 110px; height: 26px; border: 1px solid #c6c6c6; background: #fff; }
.fx button { flex: 1; } .fx .fxi { font: italic 700 15px/20px "Liberation Serif", serif; color: #666; } .fxi sub { font-size: 10px; }
.fbar { position: relative; flex: 1; margin-left: 3px; height: 66px; border: 1px solid #c6c6c6; background: #fdfdfd; }
.fbar textarea { display: block; width: 100%; height: 64px; border: 0; resize: none; background: none; }
.fbar svg { position: absolute; right: 3px; top: 8px; }

.work { flex: 1; min-height: 0; display: flex; }
.sheet { position: relative; flex: 1; min-width: 0; overflow: hidden; background: #fff; border-right: 1px solid #9b9b9b; border-bottom: 1px solid #9b9b9b; }
table { table-layout: fixed; width: 1955px; border-collapse: separate; border-spacing: 0; font: 12px/15px Lato, sans-serif; color: #000; }
.c-h { width: 26px; } .c-a { width: 137px; } .c-n { width: 64px; }
th { padding: 0; font: 12px/15px "Open Sans", sans-serif; color: #222; background: #e6e6e6; }
thead th { height: 20px; border-right: 1px solid #ababab; border-bottom: 1px solid #9b9b9b; }
thead th.frz { border-right-color: #6b6b6b; }
.corner { background: linear-gradient(135deg, #e6e6e6 60%, #b4b4b4 60%); }
thead th.sel { background: #d2d2d2; color: #217346; border-bottom: 2px solid #217346; }
tbody th { border-right: 1px solid #9b9b9b; border-bottom: 1px solid #c9c9c9; vertical-align: bottom; }
tbody th.sel { background: #d2d2d2; color: #217346; border-right: 2px solid #217346; }
td { height: 17px; padding: 0; border-right: 1px solid #d4d4d4; border-bottom: 1px solid #d4d4d4; vertical-align: bottom; white-space: nowrap; }
.d { text-align: right; padding-right: 6px; }
.d.k0 { text-align: left; padding-left: 2px; }
.d.k2 { padding-right: 0; border-right: 2px solid #000; }
.d.k3 { border-left: 1px solid #8a8a8a; }
.d.k14 { border-right: 2px solid #000; }
.hot { background: #ffc7ce; color: #9c0006; border-right-color: #ffc7ce; border-bottom-color: #ffc7ce; }
.d.k14.hot { border-right-color: #000; }
.cur { box-shadow: 0 0 0 2px #217346; position: relative; }
.cur::after { content: ""; position: absolute; right: -4px; bottom: -4px; width: 5px; height: 5px; background: #217346; border: 1px solid #fff; }
.r-first td { height: 18px; }
.r-first .copy { padding-left: 2px; border-bottom: 2px solid #000; border-right-color: #a5a5a5; }
.r-first .cover { border-bottom: 2px solid #000; }
.head td { height: 35px; border-bottom-color: #8a8a8a; }
.head .d { text-align: center; vertical-align: middle; white-space: normal; padding: 0; font-weight: 700; line-height: 17px; box-shadow: inset 0 -1px #000; }
.bold .d { font-weight: 700; }
.thick td, .dbl td { height: 18px; }
.thick .d { border-bottom: 2px solid #000; }
.thin .d { border-bottom: 1px solid #000; }
.dbl .d { border-bottom: 3px double #000; line-height: 13px; }
.tall td { height: 19px; }
.plan .k3, .plan .kn, .plan .k14 { background: #bdd7ee; border-bottom-color: #bdd7ee; }
.plan .k3, .plan .kn { border-right-color: #bdd7ee; }

.chart { position: absolute; background: #fff; left: 1122px; box-shadow: inset 0 0 0 1px #d4d4d4; font: 11px Lato, sans-serif; }
.one { top: 90px; } .two { top: 487px; }
.chart text { fill: #595959; stroke: none; }
.ct { font-size: 15px; text-anchor: middle; }
.yl { text-anchor: end; } .xl { text-anchor: middle; }
.chart .lg { font-size: 11px; }
.gl { stroke: #d9d9d9; }
.pl { fill: none; stroke-width: 3; stroke-linejoin: round; stroke-linecap: round; }

.vscroll { width: 21px; padding: 2px 3px 0; display: flex; flex-direction: column; color: #666; }
.vscroll button { height: 15px; background: #fff; border: 1px solid #ababab; flex: none; }
.vthumb { flex: 401 0 0; background: #fff; border: 1px solid #ababab; border-top: 0; } .vtrack { flex: 324 0 0; background: #dadada; }
.sheettabs { height: 28px; flex: none; display: flex; align-items: center; border-bottom: 1px solid #c6c6c6; font-size: 12px; padding-bottom: 1px; }
.navs { display: flex; width: 100px; gap: 22px; padding-left: 27px; color: #c0c0c0; }
.st { height: 20px; border-left: 1px solid #ababab; padding: 0 13px; color: #555; }
.st.on { height: 26px; align-self: flex-start; background: #fff; border: 0; border-bottom: 2px solid #217346; color: #217346; font-weight: 700; }
.add { margin-left: 32px; }
.sheettabs .dots { margin-left: auto; }
.hscroll { width: 730px; height: 16px; margin: 0 21px 0 15px; display: flex; color: #666; }
.hscroll button { width: 15px; background: #fff; border: 1px solid #ababab; flex: none; }
.hthumb { flex: 669 0 0; background: #fff; border: 1px solid #ababab; border-left: 0; } .htrack { flex: 31 0 0; background: #dadada; }
.status { height: 21px; flex: none; background: #f1f1f1; display: flex; justify-content: space-between; align-items: flex-start; line-height: 19px; padding-left: 7px; }
.views { display: flex; align-items: center; height: 20px; }
.views button { width: 38px; height: 21px; } .views .on { background: #c6c6c6; }
.views .zb { width: 15px; font-size: 16px; font-weight: 700; line-height: 16px; }
.views input { appearance: none; width: 100px; height: 12px; margin: 0; background: linear-gradient(#999, #999) 0 50% / 100% 1px no-repeat; }
.views input::-webkit-slider-thumb { appearance: none; width: 3px; height: 12px; background: #666; }
.pc { margin: 0 8px 0 12px; }
.taskbar { position: relative; height: 8px; flex: none; display: flex; background: #2c2c2e; border-top: 1px solid #000; padding-right: 8px; }
.orb { position: absolute; left: 9px; bottom: 0; z-index: 2; }
.pad { flex: 158 0 0; }
.task { flex: 120 0 0; background: linear-gradient(100deg, #b5b5b5, #7d7d7d 60%, #5a5a5a); border-top: 1px solid #ddd; border-left: 1px solid #555; padding: 4px 0 0 7px; }
.task.end { margin-right: 3px; }
.task::before { content: ""; display: block; width: 11px; height: 2px; }
.task.f::before { background: #e9dc8c; } .task.g::before { background: #2fc56a; } .task.b::before { background: #3f6fa8; } .task.x::before { background: #217346; }
.task.lit { background: #bdbdbd; }
.peek { flex: 222 0 0; border-right: 14px solid #58585a; }
</style>
